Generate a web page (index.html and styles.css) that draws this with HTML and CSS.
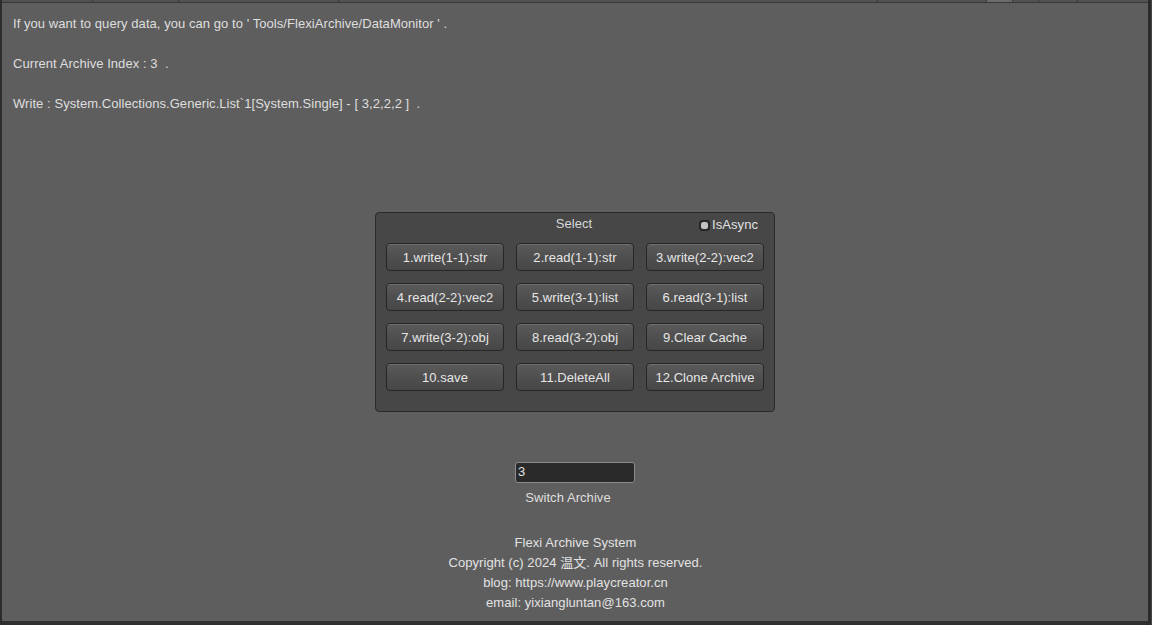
FILE: index.html
```html
<!DOCTYPE html>
<html>
<head>
<meta charset="utf-8">
<link rel="stylesheet" href="styles.css">
</head>
<body>
<div class="frame">
  <div class="tabs">
    <span class="tab" style="width:91px"></span>
    <span class="tab" style="width:86px"></span>
    <span class="tab" style="width:160px"></span>
    <span class="tab" style="width:539px"></span>
    <span class="tab" style="width:109px"></span>
    <span class="tab active" style="width:26px"></span>
    <span class="tab" style="width:26px"></span>
    <span class="tab" style="width:39px"></span>
    <span class="tab last"></span>
  </div>
  <div class="content">
    <div class="info">
      <p class="line">If you want to query data, you can go to ' Tools/FlexiArchive/DataMonitor ' .</p>
      <p class="line">Current Archive Index : 3&nbsp; .</p>
      <p class="line">Write : System.Collections.Generic.List`1[System.Single] - [ 3,2,2,2 ]&nbsp; .</p>
    </div>
    <div class="center">
      <div class="panel">
        <div class="panel-head">
          <span class="title">Select</span>
          <label class="toggle"><span class="check"><span class="dot"></span></span>IsAsync</label>
        </div>
        <div class="grid">
          <button class="btn">1.write(1-1):str</button>
          <button class="btn">2.read(1-1):str</button>
          <button class="btn">3.write(2-2):vec2</button>
          <button class="btn">4.read(2-2):vec2</button>
          <button class="btn">5.write(3-1):list</button>
          <button class="btn">6.read(3-1):list</button>
          <button class="btn">7.write(3-2):obj</button>
          <button class="btn">8.read(3-2):obj</button>
          <button class="btn">9.Clear Cache</button>
          <button class="btn">10.save</button>
          <button class="btn">11.DeleteAll</button>
          <button class="btn">12.Clone Archive</button>
        </div>
      </div>
      <div class="field">3</div>
      <div class="switch">Switch Archive</div>
      <div class="footer">
        <div>Flexi Archive System</div>
        <div>Copyright (c) 2024 温文. All rights reserved.</div>
        <div>blog: https://www.playcreator.cn</div>
        <div>email: yixiangluntan@163.com</div>
      </div>
    </div>
  </div>
</div>
</body>
</html>
```

FILE: styles.css
```css
html, body {
  margin: 0;
  padding: 0;
  background: #474747;
}
body {
  width: 1152px;
  height: 625px;
  overflow: hidden;
  font-family: "Liberation Sans", Arial, "Noto Sans CJK SC", sans-serif;
  font-size: 13px;
  letter-spacing: 0.06px;
  color: #dedede;
}
.frame {
  box-sizing: border-box;
  width: 1151px;
  height: 625px;
  background: #5e5e5e;
  border-left: 2px solid #2c2c2c;
  border-right: 3px solid #2b2b2b;
  border-bottom: 4px solid #2f2f2f;
  display: flex;
  flex-direction: column;
}
.tabs {
  display: flex;
  height: 2px;
  border-bottom: 1px solid #383838;
  background: #525252;
}
.tab {
  box-sizing: border-box;
  height: 2px;
  border-right: 1px solid #3a3a3a;
  flex: none;
}
.tab.active {
  background: #6b6b6b;
}
.tab.last {
  flex: 1;
  border-right: none;
}
.content {
  flex: 1;
  display: flex;
  flex-direction: column;
}
.info {
  padding-left: 11px;
  padding-top: 13px;
}
.line {
  margin: 0 0 24px 0;
  line-height: 16px;
  white-space: pre;
}
.center {
  display: flex;
  flex-direction: column;
  align-items: center;
  margin-top: 76px;
}
.panel {
  box-sizing: border-box;
  width: 400px;
  height: 200px;
  background: #474747;
  border: 1px solid #2a2a2a;
  border-radius: 4px;
  padding: 0 10px;
}
.panel-head {
  position: relative;
  height: 30px;
  display: flex;
  justify-content: center;
}
.title {
  margin-top: 3px;
  line-height: 16px;
  color: #d8d8d8;
  margin-left: -2px;
}
.toggle {
  position: absolute;
  right: 6px;
  top: 4px;
  display: flex;
  align-items: center;
  line-height: 16px;
  color: #e0e0e0;
}
.check {
  box-sizing: border-box;
  width: 11px;
  height: 11px;
  border-radius: 3px;
  background: #2f2f2f;
  border: 1px solid #232323;
  display: flex;
  align-items: center;
  justify-content: center;
  margin-right: 2px;
}
.dot {
  width: 7px;
  height: 7px;
  border-radius: 2.5px;
  background: #c4c4c4;
}
.grid {
  display: grid;
  grid-template-columns: repeat(3, 118px);
  grid-auto-rows: 28px;
  column-gap: 12px;
  row-gap: 12px;
  padding-top: 0;
}
.btn {
  box-sizing: border-box;
  margin: 0;
  padding: 0;
  font: inherit;
  font-size: 13px;
  letter-spacing: 0.06px;
  color: #e6e6e6;
  background: linear-gradient(#5b5b5b, #515151 40%, #474747);
  border: 1px solid #262626;
  border-radius: 4px;
  box-shadow: inset 0 1px 0 #6e6e6e;
  height: 28px;
  width: 118px;
}
.field {
  box-sizing: border-box;
  margin-top: 50px;
  width: 120px;
  height: 21px;
  background: #2a2a2a;
  border: 1px solid #8c8c8c;
  border-radius: 3px;
  color: #e0e0e0;
  line-height: 18px;
  padding-left: 2px;
}
.switch {
  margin-top: 7px;
  line-height: 16px;
  margin-left: -14px;
}
.footer {
  margin-top: 27px;
  text-align: center;
  line-height: 20px;
  color: #e2e2e2;
  margin-left: 1px;
}
```
